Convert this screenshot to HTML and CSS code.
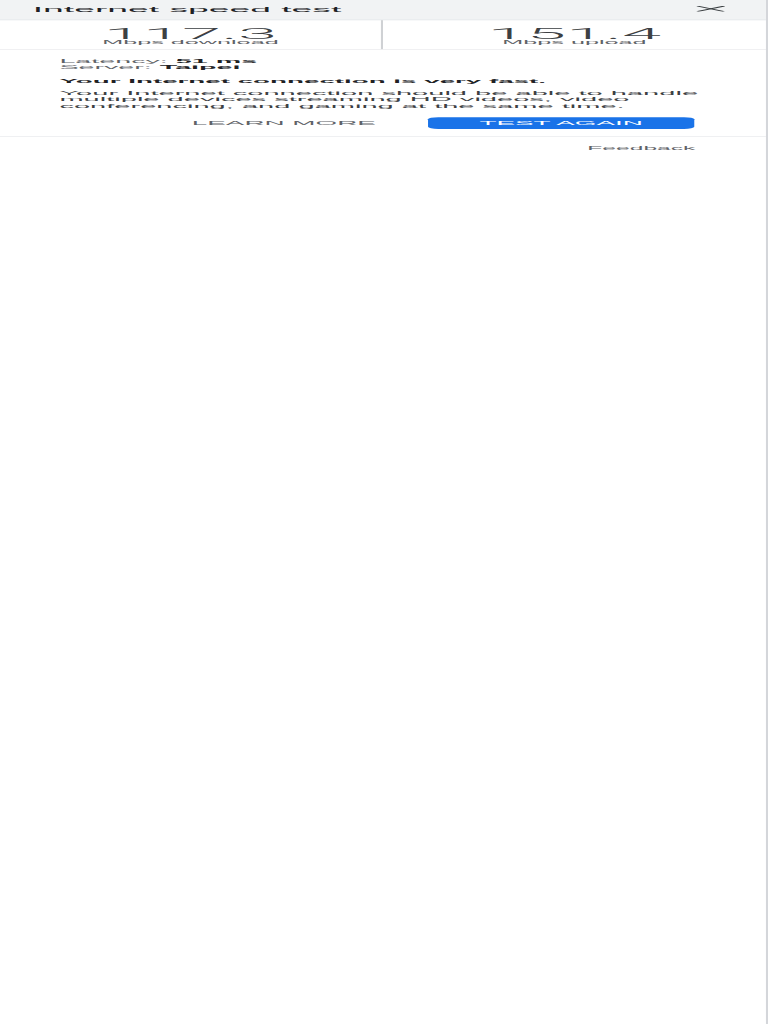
FILE: index.html
```html
<!DOCTYPE html>
<html lang="en">
<head>
<meta charset="utf-8">
<title>Internet speed test</title>
<link rel="stylesheet" href="styles.css">
</head>
<body>
<div class="page">
  <header class="topbar">
    <span class="title">Internet speed test</span>
    <svg class="close" width="14" height="14" viewBox="0 0 14 14" aria-label="Close">
      <path d="M0.5 0.5 L13.5 13.5 M13.5 0.5 L0.5 13.5" stroke="#3c4043" stroke-width="1.8" fill="none"/>
    </svg>
  </header>
  <section class="results">
    <div class="cell cell-left">
      <div class="value">117.3</div>
      <div class="unit">Mbps download</div>
    </div>
    <div class="cell">
      <div class="value">151.4</div>
      <div class="unit">Mbps upload</div>
    </div>
  </section>
  <section class="details">
    <div class="meta">Latency: <b>51 ms</b></div>
    <div class="meta">Server: <b>Taipei</b></div>
    <div class="headline">Your Internet connection is very fast.</div>
    <p class="desc">Your Internet connection should be able to handle multiple devices streaming HD videos, video conferencing, and gaming at the same time.</p>
    <div class="actions">
      <button class="btn btn-text">LEARN MORE</button>
      <button class="btn btn-primary">TEST AGAIN</button>
    </div>
  </section>
  <div class="feedback">Feedback</div>
</div>
</body>
</html>
```

FILE: styles.css
```css
* {
  box-sizing: border-box;
}

html,
body {
  margin: 0;
  padding: 0;
  overflow: hidden;
  background: #ffffff;
}

.page {
  width: 375px;
  height: 2438px;
  overflow: hidden;
  transform: scale(2.048, 0.42);
  transform-origin: 0 0;
  border-right: 1px solid #d4d6da;
  background: #ffffff;
  font-family: "Liberation Sans", Arial, sans-serif;
  color: #202124;
}

.topbar {
  display: flex;
  align-items: center;
  justify-content: space-between;
  height: 47.6px;
  padding: 0 20px 0 16px;
  background: #f1f3f4;
  border-bottom: 1px solid #dadce0;
}

.title {
  font-size: 18.2px;
  line-height: 20px;
  color: #202124;
}

.close {
  display: block;
  margin-top: -4px;
}

.results {
  display: grid;
  grid-template-columns: 1fr 1fr;
  border-bottom: 1px solid #dadce0;
}

.cell {
  text-align: center;
  padding: 19.3px 0 10.5px;
}

.cell-left {
  border-right: 1px solid #cfd1d4;
}

.value {
  font-family: Roboto, "Liberation Sans", Arial, sans-serif;
  font-weight: 300;
  font-size: 34.5px;
  line-height: 26px;
  color: #3c4043;
}

.unit {
  font-size: 12.3px;
  line-height: 14px;
  color: #5f6368;
}

.details {
  padding: 19.1px 29px 17.4px;
  border-bottom: 1px solid #dadce0;
}

.meta {
  font-size: 14px;
  line-height: 15px;
  color: #5f6368;
}

.meta b {
  color: #202124;
}

.headline {
  margin-top: 18.2px;
  font-size: 13.55px;
  line-height: 14px;
  font-weight: bold;
  color: #202124;
}

.desc {
  margin: 12.2px 0 0;
  font-size: 14.2px;
  line-height: 16px;
  color: #3c4043;
}

.actions {
  display: flex;
  justify-content: flex-end;
  gap: 5.4px;
  margin-top: 19px;
  padding-right: 6px;
}

.btn {
  width: 130px;
  height: 28.5px;
  padding: 0;
  border: none;
  font-family: "Liberation Sans", Arial, sans-serif;
  font-size: 13.6px;
  line-height: 28.5px;
  text-align: center;
}

.btn-text {
  background: transparent;
  color: #5f6368;
}

.btn-primary {
  background: #1a73e8;
  color: #ffffff;
  border-radius: 5px;
}

.feedback {
  padding: 19.5px 34.5px 0 0;
  text-align: right;
  font-size: 12px;
  line-height: 14px;
  color: #5f6368;
}
```
